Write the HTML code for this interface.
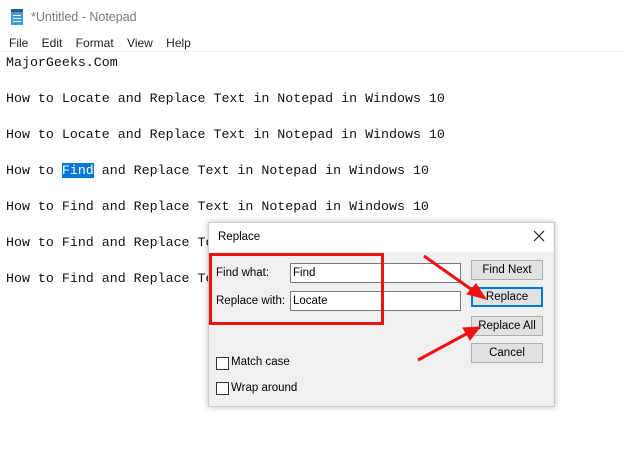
<!DOCTYPE html>
<html><head><style>
body{margin:0;width:624px;height:462px;background:#fff;position:relative;overflow:hidden;font-family:"Liberation Sans",sans-serif}
.a{position:absolute}
.t{font-family:"Liberation Mono",monospace;font-size:13.3px;color:#111;white-space:pre;left:6px}
.sel{background:#0078d7;color:#fff}
.lab{font-size:11.5px;color:#000}
.btn{position:absolute;left:471px;width:70px;height:18px;background:#e1e1e1;border:1px solid #adadad;font-size:11.5px;text-align:center;line-height:18px}
.inp{position:absolute;left:290px;width:171px;height:20px;background:#fff;border:1px solid #7a7a7a;font-size:11.5px;line-height:18px;padding-left:2px;box-sizing:border-box}
.cb{position:absolute;left:216px;width:11px;height:11px;border:1px solid #333;background:#fff}
</style></head><body>
<svg class="a" style="left:10px;top:8px" width="14" height="18"><rect x="1" y="3" width="12" height="14" fill="#3d9bd5"/><rect x="1" y="1" width="12" height="3" fill="#1e5f8f"/><g stroke="#fff" stroke-width="1"><line x1="3" y1="7.5" x2="11" y2="7.5"/><line x1="3" y1="10.5" x2="11" y2="10.5"/><line x1="3" y1="13.5" x2="11" y2="13.5"/></g></svg>
<div class="a" style="left:31px;top:10px;font-size:12.5px;color:#777">*Untitled - Notepad</div>
<div class="a" style="left:9px;top:36px;font-size:12px;color:#222">File&nbsp;&nbsp;&nbsp;&nbsp;Edit&nbsp;&nbsp;&nbsp;&nbsp;Format&nbsp;&nbsp;&nbsp;&nbsp;View&nbsp;&nbsp;&nbsp;&nbsp;Help</div>
<div class="a" style="left:0;top:51px;width:624px;height:1px;background:#eee"></div>
<div class="a t" style="top:55px">MajorGeeks.Com</div>
<div class="a t" style="top:91px">How to Locate and Replace Text in Notepad in Windows 10</div>
<div class="a t" style="top:127px">How to Locate and Replace Text in Notepad in Windows 10</div>
<div class="a t" style="top:163px">How to <span class="sel">Find</span> and Replace Text in Notepad in Windows 10</div>
<div class="a t" style="top:199px">How to Find and Replace Text in Notepad in Windows 10</div>
<div class="a t" style="top:235px">How to Find and Replace Text in Notepad in Windows 10</div>
<div class="a t" style="top:271px">How to Find and Replace Text in Notepad in Windows 10</div>

<div class="a" style="left:208px;top:222px;width:345px;height:183px;background:#f0f0f0;border:1px solid #ccc;box-shadow:0 0 6px rgba(0,0,0,.25)"></div>
<div class="a" style="left:209px;top:223px;width:344px;height:29px;background:#fff"></div>
<div class="a lab" style="left:218px;top:231px">Replace</div>
<svg class="a" style="left:533px;top:230px" width="12" height="12"><path d="M1 1L11 11M11 1L1 11" stroke="#222" stroke-width="1.2"/></svg>
<div class="a lab" style="left:216px;top:267px">Find what:</div>
<div class="a lab" style="left:216px;top:295px">Replace with:</div>
<div class="inp" style="top:263px">Find</div>
<div class="inp" style="top:291px">Locate</div>
<div class="btn" style="top:260px">Find Next</div>
<div class="btn" style="top:287px;border:2px solid #0078d7;width:68px;height:16px;line-height:16px">Replace</div>
<div class="btn" style="top:316px">Replace All</div>
<div class="btn" style="top:343px">Cancel</div>
<div class="cb" style="top:357px"></div><div class="a lab" style="left:231px;top:356px">Match case</div>
<div class="cb" style="top:382px"></div><div class="a lab" style="left:231px;top:382px">Wrap around</div>
<div class="a" style="left:209px;top:253px;width:169px;height:66px;border:3px solid #ee1111"></div>
<svg class="a" style="left:0;top:0" width="624" height="462">
<g stroke="#ee1111" stroke-width="3" fill="#ee1111">
<line x1="424" y1="256" x2="475" y2="292"/>
<polygon points="486,299 467,294 476,284" stroke-width="1"/>
<line x1="418" y1="360" x2="468" y2="333"/>
<polygon points="480,327 470,340 463,328" stroke-width="1"/>
</g></svg>
</body></html>
